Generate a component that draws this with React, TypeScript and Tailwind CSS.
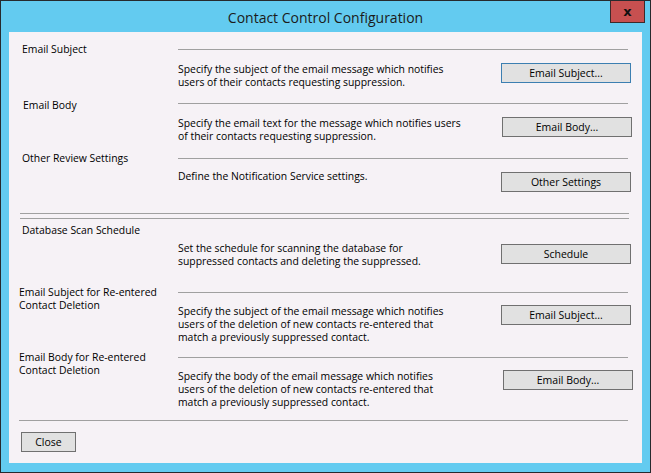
import type { ReactNode } from "react";

type SectionProps = {
  label: ReactNode;
  desc: ReactNode;
  button: string;
  className: string;
  labelClass?: string;
  lineClass?: string;
  bodyClass: string;
  buttonClass?: string;
  line?: boolean;
  focused?: boolean;
};

function WinButton({ children, className = "", focused = false }: { children: ReactNode; className?: string; focused?: boolean }) {
  return (
    <button
      className={`h-[20px] bg-[#e1e1e1] border text-[10.5px] leading-[13px] text-black ${
        focused ? "border-[#3c7fb1]" : "border-[#707070]"
      } ${className}`}
    >
      {children}
    </button>
  );
}

function Section({ label, desc, button, className, labelClass = "", lineClass = "self-center", bodyClass, buttonClass = "", line = true, focused = false }: SectionProps) {
  return (
    <div className={`grid grid-cols-[156px_323px_130px] grid-rows-[13px_auto] ${className}`}>
      {/* Libellé */}
      <div className={`col-start-1 row-start-1 row-span-2 self-start whitespace-pre-line ${labelClass}`}>{label}</div>
      {/* Trait */}
      {line && <div className={`col-start-2 col-span-2 row-start-1 h-0 border-t border-[#a0a0a0] mr-[3px] ${lineClass}`} />}
      {/* Texte + bouton */}
      <p className={`col-start-2 row-start-2 ${bodyClass}`}>{desc}</p>
      <div className={`col-start-3 row-start-2 self-start ${bodyClass}`}>
        <WinButton focused={focused} className={`w-[130px] ${buttonClass}`}>
          {button}
        </WinButton>
      </div>
    </div>
  );
}

export default function App() {
  return (
    <div className="w-[651px] h-[473px] bg-[#63cbf0] border border-[#262a2e] flex flex-col font-['Open_Sans',sans-serif] text-[10.4px] leading-[13px] text-black">
      {/* Barre de titre */}
      <div className="relative h-[31px] flex items-center justify-center shrink-0">
        <span className="text-[14px] text-[#1b1b1b] mt-[2px]">Contact Control Configuration</span>
        <div className="absolute right-[5px] top-0 w-[35px] h-[22px] bg-[#c75050] border border-[#3d2a2a] border-t-0 flex items-center justify-center">
          <span className="text-[13px] font-bold leading-none text-[#111] font-['DejaVu_Sans',sans-serif] -mt-[1px]">x</span>
        </div>
      </div>

      {/* Zone client */}
      <div className="mx-[8px] h-[431px] bg-[#f6f2f6] pl-[13px] flex flex-col">
        <Section
          className="mt-[11px]"
          label="Email Subject"
          desc={"Specify the subject of the email message which notifies\nusers of their contacts requesting suppression."}
          bodyClass="mt-[7px] whitespace-pre-line"
          button="Email Subject..."
          focused
        />
        <Section
          className="mt-[10px]"
          labelClass="ml-[1px]"
          lineClass="self-start mt-[4px]"
          label="Email Body"
          desc={"Specify the email text for the message which notifies users\nof their contacts requesting suppression."}
          bodyClass="mt-[5px] whitespace-pre-line"
          buttonClass="ml-[1px]"
          button="Email Body..."
        />
        <Section
          className="mt-[9px]"
          label="Other Review Settings"
          desc="Define the Notification Service settings."
          bodyClass="mt-[5px]"
          buttonClass="mt-[2px]"
          button="Other Settings"
        />

        {/* Double séparateur */}
        <div className="mt-[21px] -ml-[2px] mr-[13px] h-[6px] border-y border-[#a0a0a0]" />

        <Section
          className="mt-[5px]"
          line={false}
          label="Database Scan Schedule"
          desc={"Set the schedule for scanning the database for\nsuppressed contacts and deleting the suppressed."}
          bodyClass="mt-[5px] whitespace-pre-line"
          buttonClass="mt-[2px]"
          button="Schedule"
        />
        <Section
          className="mt-[18px]"
          labelClass="-ml-[3px]"
          label={"Email Subject for Re-entered\nContact Deletion"}
          desc={"Specify the subject of the email message which notifies\nusers of the deletion of new contacts re-entered that\nmatch a previously suppressed contact."}
          bodyClass="mt-[6px] whitespace-pre-line"
          button="Email Subject..."
        />
        <Section
          className="mt-[7px]"
          labelClass="-ml-[3px]"
          label={"Email Body for Re-entered\nContact Deletion"}
          desc={"Specify the body of the email message which notifies\nusers of the deletion of new contacts re-entered that\nmatch a previously suppressed contact."}
          bodyClass="mt-[6px] whitespace-pre-line"
          buttonClass="ml-[2px]"
          button="Email Body..."
        />

        {/* Séparateur bas */}
        <div className="mt-[11px] -ml-[3px] mr-[14px] border-t border-[#a0a0a0]" />

        <div className="mt-[11px] -ml-[1px]">
          <WinButton className="w-[55px]">Close</WinButton>
        </div>
      </div>
    </div>
  );
}
